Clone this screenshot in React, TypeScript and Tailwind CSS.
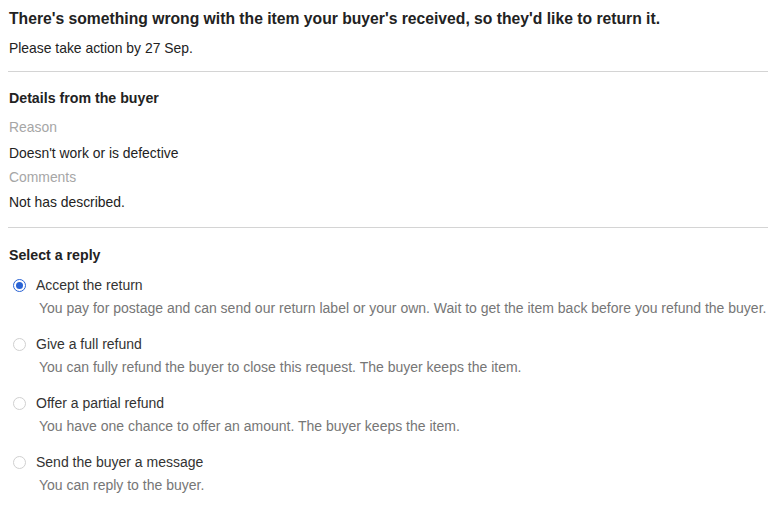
import React from "react";

const options = [
  {
    label: "Accept the return",
    desc: "You pay for postage and can send our return label or your own. Wait to get the item back before you refund the buyer.",
    checked: true,
  },
  {
    label: "Give a full refund",
    desc: "You can fully refund the buyer to close this request. The buyer keeps the item.",
  },
  {
    label: "Offer a partial refund",
    desc: "You have one chance to offer an amount. The buyer keeps the item.",
  },
  {
    label: "Send the buyer a message",
    desc: "You can reply to the buyer.",
  },
];

function Radio({ checked }: { checked?: boolean }) {
  return checked ? (
    <span className="flex h-[13px] w-[13px] shrink-0 items-center justify-center rounded-full border-[1.5px] border-[#2a63d4] bg-white">
      <span className="h-[7px] w-[7px] rounded-full bg-[#2a63d4]" />
    </span>
  ) : (
    <span className="h-[13px] w-[13px] shrink-0 rounded-full border border-[#d0d0d0] bg-white" />
  );
}

export default function App() {
  return (
    <div className="min-h-screen bg-white pl-[9px] text-[#222] font-['Liberation_Sans',Arial,sans-serif]">
      <div className="pt-[10px]">
        <h1 className="text-[15.7px] font-bold leading-[18px]">
          There's something wrong with the item your buyer's received, so they'd like to return it.
        </h1>
        <p className="mt-[12px] text-[13.9px] leading-[16px]">Please take action by 27 Sep.</p>
      </div>
      <div className="mt-[15px] -ml-px border-t border-[#d4d4d4]" />

      <div className="pt-[18px]">
        <h2 className="text-[14.2px] font-bold leading-[16px]">Details from the buyer</h2>
        <p className="mt-[13px] text-[13.9px] leading-[16px] text-[#a6a6a6]">Reason</p>
        <p className="mt-[10px] text-[13.9px] leading-[16px]">Doesn't work or is defective</p>
        <p className="mt-[8px] text-[13.9px] leading-[16px] text-[#a6a6a6]">Comments</p>
        <p className="mt-[9px] text-[13.9px] leading-[16px]">Not has described.</p>
      </div>
      <div className="mt-[17px] -ml-px border-t border-[#d4d4d4]" />

      <div className="pt-[19px]">
        <h2 className="text-[14.2px] font-bold leading-[16px]">Select a reply</h2>
        <ul className="mt-[14px] flex flex-col gap-[20px]">
          {options.map((o) => (
            <li key={o.label} className="flex flex-col">
              <div className="flex h-[16px] items-center gap-[10px] pl-[4px]">
                <Radio checked={o.checked} />
                <span className="text-[14px] leading-[16px] text-[#333]">{o.label}</span>
              </div>
              <p className="mt-[7px] pl-[30px] text-[14px] leading-[16px] text-[#767676] whitespace-nowrap">
                {o.desc}
              </p>
            </li>
          ))}
        </ul>
      </div>
    </div>
  );
}
